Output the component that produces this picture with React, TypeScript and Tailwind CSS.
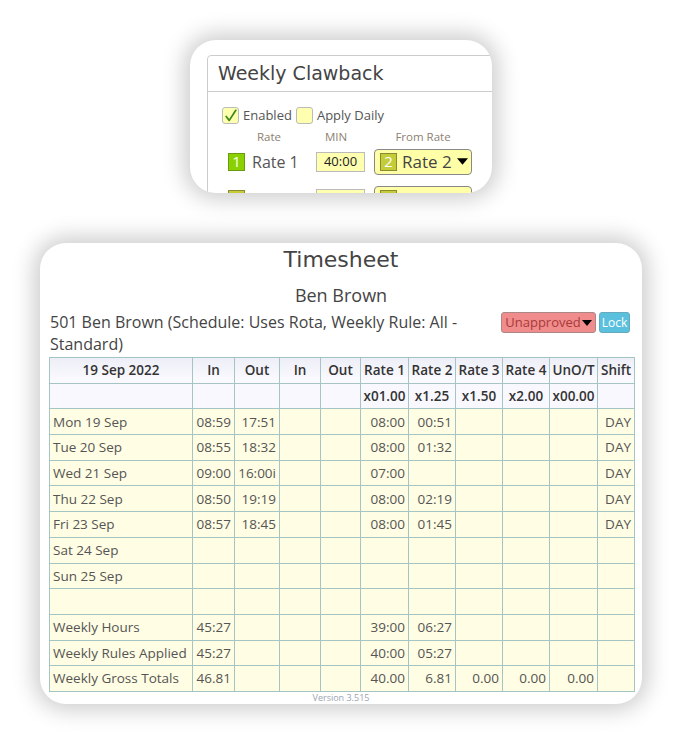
import React from 'react'

const head = { fontFamily: '"DejaVu Sans", sans-serif' }
const body = { fontFamily: '"Open Sans", sans-serif' }

function Check() {
  return (
    <svg viewBox="0 0 16 16" className="h-[14px] w-[14px]">
      <path d="M2.5 8.5 L6 13 L13.5 1.5" fill="none" stroke="#3a8a1a" strokeWidth="2" strokeLinecap="round" strokeLinejoin="round" />
    </svg>
  )
}

function Box({ checked }: { checked?: boolean }) {
  return (
    <span className="flex h-[17px] w-[17px] items-center justify-center rounded-[3px] border border-[#bbb] bg-[#ffffb0]">
      {checked && <Check />}
    </span>
  )
}

function Badge({ n, color }: { n: number; color: string }) {
  return (
    <span
      className={`flex h-[18px] w-[17px] shrink-0 items-center justify-center border text-[15px] leading-none text-white ${color}`}
    >
      {n}
    </span>
  )
}

function Tri() {
  return (
    <svg viewBox="0 0 10 6" className="h-[7px] w-[11px] shrink-0">
      <path d="M0 0 H10 L5 6 Z" fill="#000" />
    </svg>
  )
}

function RateRow({ n, min, from }: { n: number; min: string; from: number }) {
  return (
    <div className="grid grid-cols-[94px_58px_98px] items-center">
      <div className="flex items-center gap-[7px] whitespace-nowrap pl-[6px]">
        <Badge n={n} color={n === 1 ? 'bg-[#8bd000] border-[#6a9a10]' : 'bg-[#c4cc3a] border-[#8a8a30]'} />
        <span className="text-[16px] text-[#555]">Rate {n}</span>
      </div>
      <div className="flex h-[20px] w-[49px] items-center justify-center border border-[#bbb] bg-[#ffffb0] text-[13px] text-[#222]">
        {min}
      </div>
      <div className="flex h-[26px] w-[98px] items-center gap-[5px] whitespace-nowrap rounded-[4px] border border-[#888] bg-[#ffffa8] pl-[5px] pr-[3px]">
        <Badge n={from} color="bg-[#c4cc3a] border-[#8a8a30]" />
        <span className="text-[17px] leading-none text-[#444]">Rate {from}</span>
        <Tri />
      </div>
    </div>
  )
}

const rows: string[][] = [
  ['Mon 19 Sep', '08:59', '17:51', '', '', '08:00', '00:51', '', '', '', 'DAY'],
  ['Tue 20 Sep', '08:55', '18:32', '', '', '08:00', '01:32', '', '', '', 'DAY'],
  ['Wed 21 Sep', '09:00', '16:00i', '', '', '07:00', '', '', '', '', 'DAY'],
  ['Thu 22 Sep', '08:50', '19:19', '', '', '08:00', '02:19', '', '', '', 'DAY'],
  ['Fri 23 Sep', '08:57', '18:45', '', '', '08:00', '01:45', '', '', '', 'DAY'],
  ['Sat 24 Sep', '', '', '', '', '', '', '', '', '', ''],
  ['Sun 25 Sep', '', '', '', '', '', '', '', '', '', ''],
  ['', '', '', '', '', '', '', '', '', '', ''],
  ['Weekly Hours', '45:27', '', '', '', '39:00', '06:27', '', '', '', ''],
  ['Weekly Rules Applied', '45:27', '', '', '', '40:00', '05:27', '', '', '', ''],
  ['Weekly Gross Totals', '46.81', '', '', '', '40.00', '6.81', '0.00', '0.00', '0.00', ''],
]

const widths = [143, 42, 45, 41, 40, 48, 47, 47, 47, 48, 37]
const heads = ['19 Sep 2022', 'In', 'Out', 'In', 'Out', 'Rate 1', 'Rate 2', 'Rate 3', 'Rate 4', 'UnO/T', 'Shift']
const mults = ['', '', '', '', '', 'x01.00', 'x1.25', 'x1.50', 'x2.00', 'x00.00', '']

export default function App() {
  return (
    <div className="min-h-[744px] w-[683px] bg-white pt-[40px]" style={body}>
      <div className="ml-[190px] h-[153px] w-[302px] overflow-hidden rounded-[26px] bg-white pl-[17px] pt-[15px] shadow-[0_0_22px_6px_rgba(0,0,0,0.2)]">
        <div className="w-[310px] rounded-tl-[4px] border border-[#ccc]">
          <div className="flex h-[36px] items-center border-b border-[#ccc] pl-[10px] text-[19px] text-[#444]" style={head}>
            Weekly Clawback
          </div>
          <div className="pl-[14px] pt-[14px]">
            <div className="flex items-center gap-[4px] text-[13px] text-[#555]">
              <Box checked />
              <span>Enabled</span>
              <Box />
              <span>Apply Daily</span>
            </div>
            <div className="grid grid-cols-[94px_58px_98px] pt-[2px] text-[11.5px] text-[#8d7f72]">
              <span className="text-center">Rate</span>
              <span className="pl-[9px]">MIN</span>
              <span className="text-center">From Rate</span>
            </div>
            <div className="flex flex-col gap-[11px] pt-[4px]">
              <RateRow n={1} min="40:00" from={2} />
              <RateRow n={2} min="" from={3} />
            </div>
          </div>
        </div>
      </div>

      <div className="ml-[40px] mt-[50px] w-[602px] rounded-[26px] bg-white px-[9px] pt-[2px] shadow-[0_0_22px_6px_rgba(0,0,0,0.2)]">
        <div className="text-center text-[22px] leading-[30px] text-[#444]" style={head}>
          Timesheet
        </div>
        <div className="mt-[8px] text-center text-[18px] leading-[24px] text-[#444]">Ben Brown</div>
        <div className="mt-[4px] flex items-start">
          <div className="w-[446px] pl-[1px] text-[16px] leading-[22px] text-[#444]">
            501 Ben Brown (Schedule: Uses Rota, Weekly Rule: All - Standard)
          </div>
          <div className="ml-auto mr-[3px] mt-[1px] flex items-center gap-[3px]">
            <span className="flex h-[21px] w-[95px] items-center justify-center gap-[1px] rounded-[3px] border border-[#a88] bg-[#f08c8c] text-[13px] text-[#a83a3a]">
              Unapproved
              <svg viewBox="0 0 10 6" className="h-[6px] w-[10px]">
                <path d="M0 0 H10 L5 6 Z" fill="#000" />
              </svg>
            </span>
            <span className="flex h-[21px] w-[31px] items-center justify-center rounded-[3px] border border-[#6ab] bg-[#5bc0de] text-[12px] text-white">
              Lock
            </span>
          </div>
        </div>
        <table className="mt-[2px] w-[585px] table-fixed border-collapse text-[13.5px]">
          <colgroup>
            {widths.map((w, i) => (
              <col key={i} style={{ width: w }} />
            ))}
          </colgroup>
          <thead>
            <tr className="h-[25.7px] bg-gradient-to-b from-[#eeeef8] to-[#fbfbff]">
              {heads.map((h, i) => (
                <th key={i} className="whitespace-nowrap border border-[#a5c4c4] p-0 text-center font-semibold text-[#333]">
                  {h}
                </th>
              ))}
            </tr>
            <tr className="h-[25.7px] bg-[#f8f8fe]">
              {mults.map((h, i) => (
                <th key={i} className="whitespace-nowrap border border-[#a5c4c4] p-0 text-center font-semibold text-[#333]">
                  {h}
                </th>
              ))}
            </tr>
          </thead>
          <tbody>
            {rows.map((r, ri) => (
              <tr key={ri} className="h-[25.7px] bg-[#fffde3]">
                {r.map((c, ci) => (
                  <td
                    key={ci}
                    className={`whitespace-nowrap border border-[#a5c4c4] px-[3px] py-0 text-[#555] ${ci === 0 ? 'text-left' : 'text-right'}`}
                  >
                    {c}
                  </td>
                ))}
              </tr>
            ))}
          </tbody>
        </table>
        <div className="h-[12px] text-center text-[9px] leading-[12px] text-[#9aa4b0]">Version 3.515</div>
      </div>
    </div>
  )
}
